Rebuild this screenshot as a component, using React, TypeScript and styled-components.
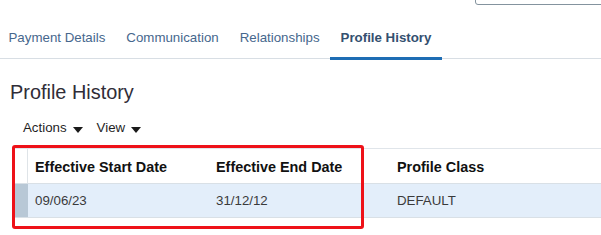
import React from "react";
import styled, { createGlobalStyle } from "styled-components";

const Global = createGlobalStyle`
  html, body { margin: 0; padding: 0; background: #ffffff; }
  body { font-family: "Liberation Sans", Arial, sans-serif; font-size: 13.3px; color: #333333; overflow: hidden; }
  * { box-sizing: border-box; }
`;

const Page = styled.div`
  width: 601px;
  height: 235px;
  overflow: hidden;
  display: flex;
  flex-direction: column;
`;

const TopBar = styled.div`
  height: 5px;
  overflow: hidden;
  display: flex;
  justify-content: flex-end;
  align-items: flex-end;
`;

const SearchBox = styled.div`
  width: 132px;
  height: 30px;
  margin-right: -6px;
  border: 1px solid #84939e;
  border-radius: 3px;
  flex-shrink: 0;
`;

const TabBar = styled.div`
  height: 54px;
  border-bottom: 1px solid #d8dee4;
  display: flex;
  align-items: flex-start;
  margin-left: -2px;
`;

const Tab = styled.div<{ $active?: boolean }>`
  height: 55px;
  padding: 25px 10.5px 0;
  line-height: 16px;
  font-size: 13.3px;
  white-space: nowrap;
  color: ${(p) => (p.$active ? "#34506f" : "#46678d")};
  font-weight: ${(p) => (p.$active ? 700 : 400)};
  border-bottom: 3px solid ${(p) => (p.$active ? "#1e6db4" : "transparent")};
`;

const Content = styled.div`
  padding-left: 10px;
  display: flex;
  flex-direction: column;
`;

const Heading = styled.h1`
  margin: 21px 0 0;
  font-size: 19.9px;
  line-height: 24px;
  font-weight: 400;
  color: #302d38;
`;

const Toolbar = styled.div`
  margin-top: 16px;
  padding-left: 13px;
  display: flex;
  align-items: center;
  gap: 14px;
  line-height: 16px;
  color: #1f1f1f;
`;

const MenuButton = styled.div`
  display: flex;
  align-items: center;
  gap: 6px;
  white-space: nowrap;
`;

const Caret = styled.span`
  width: 0;
  height: 0;
  border-left: 5px solid transparent;
  border-right: 5px solid transparent;
  border-top: 6px solid #1a1a1a;
  margin-top: 3px;
`;

const TableWrap = styled.div`
  position: relative;
  margin-top: 12px;
  margin-left: 2px;
`;

const Table = styled.div`
  border-top: 1px solid #e0e5ea;
  margin-right: -20px;
`;

const Row = styled.div<{ $header?: boolean }>`
  display: grid;
  grid-template-columns: 16px 181px 181px 1fr;
  height: ${(p) => (p.$header ? "35px" : "34px")};
  border-bottom: 1px solid #d9e0e6;
  background: ${(p) => (p.$header ? "#ffffff" : "#e3eefa")};
`;

const Gutter = styled.div<{ $selected?: boolean }>`
  background: ${(p) => (p.$selected ? "#b8c8d6" : "#ffffff")};
  border-right: 1px solid ${(p) => (p.$selected ? "#b8c8d6" : "#dfe4e8")};
`;

const Cell = styled.div<{ $header?: boolean }>`
  display: flex;
  align-items: center;
  padding-left: 7px;
  line-height: 16px;
  white-space: nowrap;
  font-size: ${(p) => (p.$header ? "14.4px" : "13.3px")};
  font-weight: ${(p) => (p.$header ? 700 : 400)};
  color: ${(p) => (p.$header ? "#111111" : "#3a3a3a")};
  padding-top: ${(p) => (p.$header ? "1px" : "0")};
`;

const Highlight = styled.div`
  position: absolute;
  left: 0;
  top: -3px;
  width: 352px;
  height: 84px;
  border: 3px solid #ee1118;
  border-radius: 3px;
  pointer-events: none;
`;

const tabs = ["Payment Details", "Communication", "Relationships", "Profile History"];

export default function App() {
  return (
    <>
      <Global />
      <Page>
        <TopBar>
          <SearchBox />
        </TopBar>
        <TabBar>
          {tabs.map((t) => (
            <Tab key={t} $active={t === "Profile History"}>
              {t}
            </Tab>
          ))}
        </TabBar>
        <Content>
          <Heading>Profile History</Heading>
          <Toolbar>
            <MenuButton>
              Actions <Caret />
            </MenuButton>
            <MenuButton>
              View <Caret />
            </MenuButton>
          </Toolbar>
          <TableWrap>
            <Table>
              <Row $header>
                <Gutter />
                <Cell $header>Effective Start Date</Cell>
                <Cell $header>Effective End Date</Cell>
                <Cell $header>Profile Class</Cell>
              </Row>
              <Row>
                <Gutter $selected />
                <Cell>09/06/23</Cell>
                <Cell>31/12/12</Cell>
                <Cell>DEFAULT</Cell>
              </Row>
            </Table>
            <Highlight />
          </TableWrap>
        </Content>
      </Page>
    </>
  );
}
